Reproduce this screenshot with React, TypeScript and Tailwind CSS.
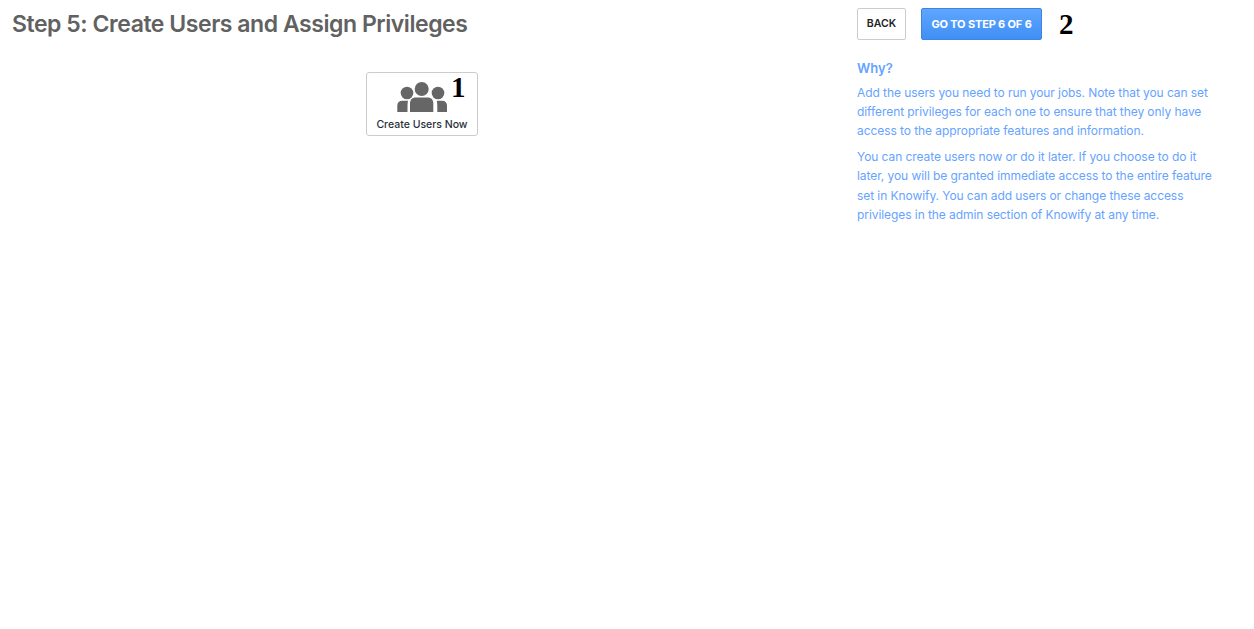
const sans = { fontFamily: 'Inter, sans-serif' };
const serif = { fontFamily: '"Liberation Serif", serif' };

function UsersIcon() {
  return (
    <svg width="50" height="30" viewBox="0 0 50 30" fill="#666666">
      <circle cx="10" cy="11" r="6.300" />
      <circle cx="41" cy="11" r="6.300" />
      <circle cx="24.700" cy="7" r="7" />
      <path d="M0.300 30v-6.500C0.300 20.500 2.300 18.700 5.300 18.700h5.700C10.600 20.500 10.500 23 10.500 25v5z" />
      <path d="M50 30v-6.500c0-3-2-4.800-5-4.800h-5.200c.4 1.800 .5 4.300 .5 6.300v5z" />
      <path d="M13 30v-8.500c0-4 2.500-6 5.500-6h12.300c3 0 5.500 2 5.500 6V30z" />
    </svg>
  );
}

export default function App() {
  return (
    <div className="flex min-h-[629px] bg-white" style={sans}>
      <div className="w-[857px] shrink-0 pl-3 pt-[10px]">
        <h1 className="text-[23px] leading-[28px] font-semibold text-[#616161] tracking-[-0.45px] whitespace-nowrap">
          Step 5: Create Users and Assign Privileges
        </h1>
        <div className="flex justify-center pt-[34px] pr-[25px]">
          <button className="relative flex h-[64px] w-[112px] flex-col items-center rounded-[3px] border border-[#cccccc] bg-white pt-[9px]">
            <UsersIcon />
            <span className="mt-[6px] text-[10.5px] leading-[14px] font-medium text-[#27303a] whitespace-nowrap">Create Users Now</span>
            <span
              className="absolute left-[84px] top-[-3px] text-[29px] leading-[34px] font-bold text-black"
              style={serif}
            >
              1
            </span>
          </button>
        </div>
      </div>
      <div className="w-[362px] pt-2">
        <div className="flex items-center">
          <button className="h-[32px] w-[49px] rounded-[2px] border border-[#cccccc] bg-white text-[10.5px] font-semibold text-[#222222]">
            BACK
          </button>
          <button className="ml-[15px] h-[32px] w-[121px] rounded-[2px] border border-[#3d85e0] bg-gradient-to-b from-[#5ea6ff] to-[#3f8ff5] text-[11px] font-bold text-white tracking-[-0.15px] whitespace-nowrap">
            GO TO STEP 6 OF 6
          </button>
          <span className="ml-[17px] text-[29px] leading-[32px] font-bold text-black" style={serif}>
            2
          </span>
        </div>
        <h2 className="mt-[18px] text-[13px] leading-[20px] font-semibold text-[#66a3ff]">Why?</h2>
        <p className="mt-[5px] text-[12px] leading-[19px] text-[#66a3ff] tracking-[-0.07px] whitespace-nowrap">
          Add the users you need to run your jobs. Note that you can set<br />
          different privileges for each one to ensure that they only have<br />
          access to the appropriate features and information.
        </p>
        <p className="mt-[7px] text-[12px] leading-[19.4px] text-[#66a3ff] tracking-[-0.07px] whitespace-nowrap">
          You can create users now or do it later. If you choose to do it<br />
          later, you will be granted immediate access to the entire feature<br />
          set in Knowify. You can add users or change these access<br />
          privileges in the admin section of Knowify at any time.
        </p>
      </div>
    </div>
  );
}
